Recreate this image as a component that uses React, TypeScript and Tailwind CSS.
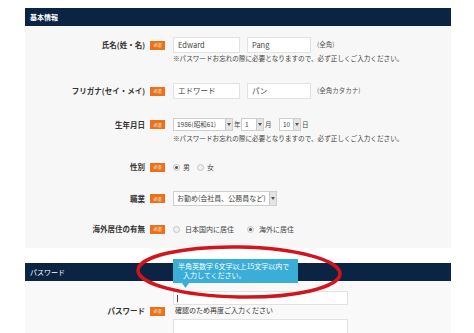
import type { ReactNode } from "react";

function Badge() {
  return (
    <span className="flex h-[9px] w-[15px] items-center justify-center bg-[#e8731c] text-[4px] leading-none text-[#ffe9d6]">
      必須
    </span>
  );
}

function Label({ text, h }: { text: string; h: string }) {
  return (
    <div className={`flex w-[140px] shrink-0 items-center justify-end gap-[5px] ${h}`}>
      <span className="text-[7.5px] font-bold leading-none text-[#333]">{text}</span>
      <Badge />
    </div>
  );
}

function Input({ value, w }: { value?: string; w: string }) {
  return (
    <div className={`flex h-[16px] items-center border border-[#e2e2e2] bg-white pl-[4px] text-[7.5px] text-[#444] ${w}`}>
      {value}
    </div>
  );
}

function Select({ value, w }: { value: string; w: string }) {
  return (
    <div className={`flex h-[13px] items-stretch border border-[#cfcfcf] bg-white ${w}`}>
      <span className="flex flex-1 items-center pl-[3px] text-[6.5px] text-[#444]">{value}</span>
      <span className="flex w-[7px] items-center justify-center border-l border-[#c8c8c8] bg-[#e4e4e4]">
        <svg width="4" height="3" viewBox="0 0 4 3">
          <path d="M0 0h4L2 3z" fill="#555" />
        </svg>
      </span>
    </div>
  );
}

function Radio({ checked }: { checked?: boolean }) {
  return (
    <span className="flex size-[7px] items-center justify-center rounded-full border border-[#c4c4c4] bg-[#f2f2f2]">
      {checked && <span className="size-[3px] rounded-full bg-[#555]" />}
    </span>
  );
}

function Row({ className, label, h, children }: { className: string; label: string; h: string; children: ReactNode }) {
  return (
    <div className={`flex items-start ${className}`}>
      <Label text={label} h={h} />
      <div className="ml-[8px] flex flex-col">{children}</div>
    </div>
  );
}

const note = "※パスワードお忘れの際に必要となりますので、必ず正しくご入力ください。";

export default function App() {
  return (
    <div className="relative h-[333px] w-[474px] overflow-hidden bg-white font-['Noto_Sans_CJK_JP',sans-serif] text-[#333]">
      <div className="ml-[25px] w-[426px] pt-[8px]">
        <div className="flex h-[18px] items-center bg-[#0c2443] pl-[5px] text-[7px] font-bold text-white">基本情報</div>

        <div className="bg-[#f7f7f7] pb-[13px] pt-[11px]">
          <Row className="" label="氏名(姓・名)" h="h-[16px]">
            <div className="flex items-center">
              <Input value="Edward" w="w-[67px]" />
              <div className="ml-[7px]">
                <Input value="Pang" w="w-[64px]" />
              </div>
              <span className="ml-[6px] text-[6.5px] text-[#555]">(全角)</span>
            </div>
            <p className="mt-[1px] text-[6.6px] leading-[9px] text-[#444]">{note}</p>
          </Row>

          <Row className="mt-[20px]" label="フリガナ(セイ・メイ)" h="h-[16px]">
            <div className="flex items-center">
              <Input value="エドワード" w="w-[67px]" />
              <div className="ml-[7px]">
                <Input value="パン" w="w-[64px]" />
              </div>
              <span className="ml-[6px] text-[6.5px] text-[#555]">(全角カタカナ)</span>
            </div>
          </Row>

          <Row className="mt-[19px]" label="生年月日" h="h-[13px]">
            <div className="flex items-center text-[6.5px] text-[#444]">
              <Select value="1986(昭和61)" w="w-[60px]" />
              <span className="ml-[1px] w-[7px]">年</span>
              <Select value="1" w="w-[23px]" />
              <span className="ml-[1px] w-[14px]">月</span>
              <Select value="10" w="w-[22px]" />
              <span className="ml-[1px]">日</span>
            </div>
            <p className="mt-[3px] text-[6.6px] leading-[8px] text-[#444]">{note}</p>
          </Row>

          <Row className="mt-[20px]" label="性別" h="h-[10px]">
            <div className="flex h-[10px] items-center text-[7px] text-[#444]">
              <Radio checked />
              <span className="ml-[3px]">男</span>
              <span className="ml-[7px]" />
              <Radio />
              <span className="ml-[3px]">女</span>
            </div>
          </Row>

          <Row className="mt-[19px]" label="職業" h="h-[15px]">
            <div className="flex h-[15px] w-[104px] items-stretch border border-[#cfcfcf] bg-white">
              <span className="flex flex-1 items-center pl-[3px] text-[7px] text-[#444]">お勤め(会社員、公務員など)</span>
              <span className="flex w-[7px] items-center justify-center border-l border-[#c8c8c8] bg-[#e4e4e4]">
                <svg width="4" height="3" viewBox="0 0 4 3">
                  <path d="M0 0h4L2 3z" fill="#555" />
                </svg>
              </span>
            </div>
          </Row>

          <Row className="mt-[17px]" label="海外居住の有無" h="h-[12px]">
            <div className="flex h-[12px] items-center text-[7px] text-[#444]">
              <Radio />
              <span className="ml-[5px]">日本国内に居住</span>
              <span className="ml-[13px]" />
              <Radio checked />
              <span className="ml-[5px]">海外に居住</span>
            </div>
          </Row>
        </div>

        <div className="h-[15px]" />

        <div className="flex h-[18px] items-center bg-[#0c2443] pl-[5px] text-[7px] text-white">パスワード</div>

        <div className="flex items-start bg-[#f9f9f9] pt-[10px]">
          <div className="mt-[15px]">
            <Label text="パスワード" h="h-[10px]" />
          </div>
          <div className="ml-[8px] flex flex-col">
            <div className="flex h-[14px] w-[175px] items-center border border-[#e2e2e2] bg-white pl-[3px]">
              <span className="h-[7px] w-px bg-[#444]" />
            </div>
            <p className="flex h-[10px] items-center pl-[2px] text-[7px] text-[#333]">確認のため再度ご入力ください</p>
            <div className="mt-[4px] h-[16px] w-[175px] border border-[#e2e2e2] bg-white" />
          </div>
        </div>
      </div>

      <div className="absolute left-[173px] top-[259px] h-[24px] w-[125px] bg-[#3aaed7] pl-[5px] pt-[3px] text-[7px] leading-[9px] text-white">
        <div>半角英数字 6文字以上15文字以内で</div>
        <div className="pl-[5px]">入力してください。</div>
        <svg className="absolute left-[9px] top-[24px]" width="7" height="5" viewBox="0 0 7 5">
          <path d="M0 0h7L3.5 5z" fill="#3aaed7" />
        </svg>
      </div>

      <svg className="absolute left-0 top-0" width="474" height="333" viewBox="0 0 474 333">
        <ellipse cx="239" cy="272" rx="101" ry="25" fill="none" stroke="#d3141c" strokeWidth="3.5" transform="rotate(1 239 272)" />
      </svg>
    </div>
  );
}
